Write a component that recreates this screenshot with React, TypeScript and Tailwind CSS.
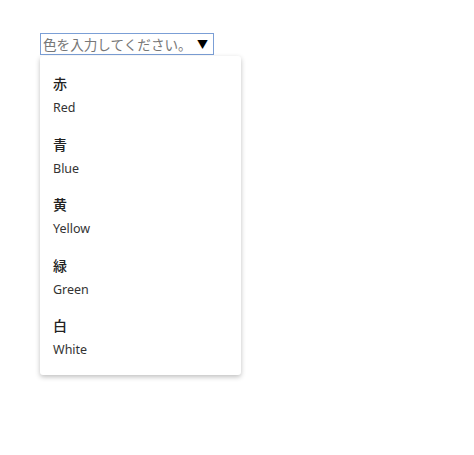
const COLORS = [
  { ja: "赤", en: "Red" },
  { ja: "青", en: "Blue" },
  { ja: "黄", en: "Yellow" },
  { ja: "緑", en: "Green" },
  { ja: "白", en: "White" },
];

export default function App() {
  return (
    <div
      className="min-h-[455px] w-full bg-white pl-[40px] pt-[33px]"
      style={{ fontFamily: '"Noto Sans", "Noto Sans CJK JP", sans-serif' }}
    >
      <div className="flex h-[22px] w-[174px] items-center border border-[#7b9fd6] pl-[2px]">
        <input
          className="w-[154px] bg-transparent text-[13.6px] leading-none text-black outline-none placeholder:text-[#777]"
          placeholder="色を入力してください。"
        />
        <span className="text-[11px] leading-none text-black">▼</span>
      </div>
      <ul className="mt-px w-[201px] rounded-[3px] bg-white py-2 shadow-[0_2px_5px_rgba(0,0,0,0.25)]">
        {COLORS.map((c) => (
          <li key={c.en} className="px-[13px] pt-[10px] pb-[6.5px]">
            <div className="text-[14px] font-medium leading-5 text-[#222]">{c.ja}</div>
            <div className="mt-[4px] text-[12.5px] leading-5 text-[#333]">{c.en}</div>
          </li>
        ))}
      </ul>
    </div>
  );
}
